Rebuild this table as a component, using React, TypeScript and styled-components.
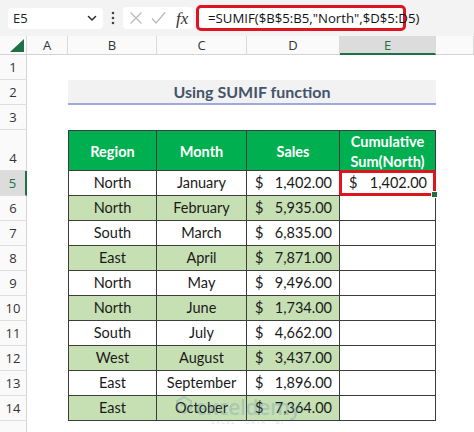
import React from "react";
import styled, { createGlobalStyle, css } from "styled-components";

const GlobalStyle = createGlobalStyle`
  html, body { margin: 0; padding: 0; background: #ffffff; }
  body { font-family: Lato, "Noto Sans", sans-serif; }
`;

const Frame = styled.div`
  position: relative;
  width: 474px;
  height: 432px;
  overflow: hidden;
  background: #ffffff;
`;

const FormulaBar = styled.div`
  display: flex;
  align-items: center;
  height: 36px;
  padding: 0 0 0 8px;
  background: #f3f3f3;
  box-sizing: border-box;
`;

const NameBox = styled.div`
  display: flex;
  align-items: center;
  justify-content: space-between;
  box-sizing: border-box;
  width: 95px;
  height: 21px;
  padding: 0 6px 0 5px;
  background: #ffffff;
  border-radius: 4px;
  font-family: "Open Sans", sans-serif;
  font-size: 13px;
  color: #222;
`;

const DotsSlot = styled.div`
  display: flex;
  align-items: center;
  justify-content: center;
  width: 20px;
  height: 21px;
`;

const ActionBox = styled.div`
  display: flex;
  align-items: center;
  gap: 8px;
  box-sizing: border-box;
  width: 70px;
  height: 22px;
  padding: 0 4px 0 6px;
  background: #ffffff;
  border-radius: 4px;
`;

const Fx = styled.span`
  font-family: "Liberation Serif", serif;
  font-style: italic;
  font-size: 17px;
  color: #333;
  line-height: 1;
  margin-left: 2px;
`;

const FormulaInput = styled.div`
  display: flex;
  align-items: center;
  box-sizing: border-box;
  width: 210px;
  height: 26px;
  margin-left: 3px;
  padding: 0 0 0 9px;
  border: 3px solid #e0141e;
  border-radius: 5px;
  background: #ffffff;
  font-family: "Open Sans", sans-serif;
  font-size: 13.2px;
  color: #111;
  white-space: nowrap;
`;

const Sheet = styled.div`
  display: grid;
  grid-template-columns: 27px 41px 89px 90px 93px 96px 1fr;
  grid-template-rows: 19px 25px 25px 25px 41px repeat(11, 25px);
  font-family: Lato, sans-serif;
`;

const ColHead = styled.div<{ $selected?: boolean }>`
  display: flex;
  align-items: center;
  justify-content: center;
  box-sizing: border-box;
  border-right: 1px solid #dadada;
  border-bottom: 1px solid #d4d4d4;
  background: #fafafa;
  font-family: "Open Sans", sans-serif;
  font-size: 13px;
  color: #333;
  ${(p) =>
    p.$selected &&
    css`
      background: #dcdcdc;
      border-bottom: 2px solid #1e7145;
      color: #1e7145;
    `}
`;

const Corner = styled(ColHead)`
  align-items: flex-end;
  justify-content: flex-end;
  padding: 0 2px 2px 0;
`;

const RowHead = styled.div<{ $selected?: boolean }>`
  display: flex;
  align-items: flex-end;
  justify-content: center;
  box-sizing: border-box;
  padding-bottom: 3px;
  border-right: 1px solid #d4d4d4;
  border-bottom: 1px solid #dedede;
  background: #fafafa;
  font-family: "Open Sans", sans-serif;
  font-size: 13px;
  color: #333;
  ${(p) =>
    p.$selected &&
    css`
      background: #dcdcdc;
      border-right: 2px solid #1e7145;
      color: #1e7145;
    `}
`;

const Blank = styled.div<{ $span?: number }>`
  background: #ffffff;
  ${(p) => p.$span && css`grid-column: span ${p.$span};`}
`;

const Title = styled.div`
  grid-column: span 4;
  display: flex;
  align-items: center;
  justify-content: center;
  box-sizing: border-box;
  background: #f2f2f2;
  border-bottom: 2px solid #9ea9dc;
  font-family: Lato, sans-serif;
  font-weight: 700;
  font-size: 16px;
  color: #44546a;
`;

const Cell = styled.div<{ $header?: boolean; $shade?: boolean; $first?: boolean; $active?: boolean }>`
  position: relative;
  display: flex;
  align-items: center;
  justify-content: center;
  box-sizing: border-box;
  border-right: 1px solid #3c3c3c;
  border-bottom: 1px solid #3c3c3c;
  background: ${(p) => (p.$header ? "#00b050" : p.$shade ? "#c6e0b4" : "#ffffff")};
  color: ${(p) => (p.$header ? "#ffffff" : "#1a1a1a")};
  font-size: 14.5px;
  font-weight: ${(p) => (p.$header ? 700 : 400)};
  text-align: center;
  line-height: 20px;
  ${(p) => p.$first && css`border-left: 1px solid #3c3c3c;`}
  ${(p) => p.$header && css`border-top: 1px solid #3c3c3c; padding-top: 2px;`}
  ${(p) =>
    p.$active &&
    css`
      &::after {
        content: "";
        position: absolute;
        left: -1px;
        top: -1px;
        right: -1px;
        bottom: -1px;
        border: 3px solid #e0141e;
        border-radius: 3px;
      }
    `}
`;

const Money = styled(Cell)<{ $padLeft: number; $padRight: number }>`
  justify-content: space-between;
  padding: 0 ${(p) => p.$padRight}px 0 ${(p) => p.$padLeft}px;
`;

const FillHandle = styled.span`
  position: absolute;
  right: -3px;
  bottom: -3px;
  width: 5px;
  height: 5px;
  background: #1e7145;
  border: 1px solid #ffffff;
  z-index: 2;
`;

const Watermark = styled.div`
  position: absolute;
  left: 176px;
  top: 396px;
  display: flex;
  align-items: flex-start;
  gap: 3px;
  opacity: 0.3;
  pointer-events: none;
`;

const WatermarkText = styled.div`
  display: flex;
  flex-direction: column;
  align-items: center;
  color: #6d8fb0;
  font-family: "Open Sans", sans-serif;
`;

const WatermarkName = styled.span`
  font-size: 21px;
  font-weight: 600;
  line-height: 22px;
  letter-spacing: -0.3px;
`;

const WatermarkTag = styled.span`
  font-size: 6px;
  letter-spacing: 1.5px;
  line-height: 8px;
`;

const rows: [string, string, string][] = [
  ["North", "January", "1,402.00"],
  ["North", "February", "5,935.00"],
  ["South", "March", "6,835.00"],
  ["East", "April", "7,871.00"],
  ["North", "May", "9,496.00"],
  ["North", "June", "1,734.00"],
  ["South", "July", "4,662.00"],
  ["West", "August", "3,437.00"],
  ["East", "September", "1,896.00"],
  ["East", "October", "7,364.00"],
];

const Chevron = () => (
  <svg width="10" height="7" viewBox="0 0 10 7">
    <path d="M1.5 1.5 L5 5 L8.5 1.5" fill="none" stroke="#333" strokeWidth="1.6" strokeLinecap="round" strokeLinejoin="round" />
  </svg>
);

const VDots = () => (
  <svg width="4" height="14" viewBox="0 0 4 14">
    <circle cx="2" cy="2" r="1.3" fill="#444" />
    <circle cx="2" cy="7" r="1.3" fill="#444" />
    <circle cx="2" cy="12" r="1.3" fill="#444" />
  </svg>
);

const XIcon = () => (
  <svg width="14" height="14" viewBox="0 0 14 14">
    <path d="M1.5 1.5 L12.5 12.5 M12.5 1.5 L1.5 12.5" stroke="#b9b9b9" strokeWidth="1.2" fill="none" />
  </svg>
);

const CheckIcon = () => (
  <svg width="15" height="14" viewBox="0 0 15 14">
    <path d="M1 7.5 L5 12 L14 1.5" stroke="#b9b9b9" strokeWidth="1.2" fill="none" />
  </svg>
);

const CornerTriangle = () => (
  <svg width="14" height="13" viewBox="0 0 14 13">
    <polygon points="0,13 14,13 14,0" fill="#1e7145" />
  </svg>
);

const LogoMark = () => (
  <svg width="16" height="18" viewBox="0 0 16 18">
    <path d="M8 1 L15 5 L15 13 L8 17 L1 13 L1 5 Z" fill="none" stroke="#6d8fb0" strokeWidth="2" />
    <path d="M5 9 L11 9" stroke="#6d8fb0" strokeWidth="2" />
  </svg>
);

export default function App() {
  const cols = ["A", "B", "C", "D", "E"];
  return (
    <Frame>
      <GlobalStyle />
      <FormulaBar>
        <NameBox>
          <span>E5</span>
          <Chevron />
        </NameBox>
        <DotsSlot>
          <VDots />
        </DotsSlot>
        <ActionBox>
          <XIcon />
          <CheckIcon />
          <Fx>fx</Fx>
        </ActionBox>
        <FormulaInput>=SUMIF($B$5:B5,"North",$D$5:D5)</FormulaInput>
      </FormulaBar>
      <Sheet>
        <Corner>
          <CornerTriangle />
        </Corner>
        {cols.map((c) => (
          <ColHead key={c} $selected={c === "E"}>
            {c}
          </ColHead>
        ))}
        <ColHead />

        <RowHead>1</RowHead>
        <Blank $span={6} />

        <RowHead>2</RowHead>
        <Blank />
        <Title>Using SUMIF function</Title>
        <Blank />

        <RowHead>3</RowHead>
        <Blank $span={6} />

        <RowHead>4</RowHead>
        <Blank />
        <Cell $header $first>Region</Cell>
        <Cell $header>Month</Cell>
        <Cell $header>Sales</Cell>
        <Cell $header>
          Cumulative
          <br />
          Sum(North)
        </Cell>
        <Blank />

        {rows.map(([region, month, sales], i) => {
          const shade = i % 2 === 1;
          const n = i + 5;
          return (
            <React.Fragment key={n}>
              <RowHead $selected={n === 5}>{n}</RowHead>
              <Blank />
              <Cell $first $shade={shade}>{region}</Cell>
              <Cell $shade={shade}>{month}</Cell>
              <Money $shade={shade} $padLeft={8} $padRight={7}>
                <span>$</span>
                <span>{sales}</span>
              </Money>
              {i === 0 ? (
                <Money $active $padLeft={9} $padRight={8}>
                  <span>$</span>
                  <span>1,402.00</span>
                  <FillHandle />
                </Money>
              ) : (
                <Cell />
              )}
              <Blank />
            </React.Fragment>
          );
        })}

        <RowHead />
        <Blank $span={6} />
      </Sheet>
      <Watermark>
        <LogoMark />
        <WatermarkText>
          <WatermarkName>exceldemy</WatermarkName>
          <WatermarkTag>EXCEL · DATA · BI</WatermarkTag>
        </WatermarkText>
      </Watermark>
    </Frame>
  );
}
